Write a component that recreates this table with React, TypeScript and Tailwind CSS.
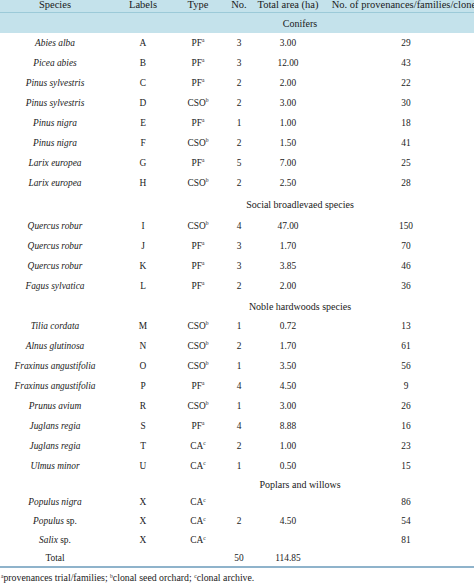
import React from "react";

type Row = {
  species: string;
  sp?: boolean;
  label: string;
  type: "PF" | "CSO" | "CA";
  no?: string;
  area?: string;
  count: string;
  h?: string;
};

type Section = { title: string; h: string; rows: Row[] };

const SUP = { PF: "a", CSO: "b", CA: "c" } as const;

const SECTIONS: Section[] = [
  {
    title: "Conifers",
    h: "h-[20px]",
    rows: [
      { species: "Abies alba", label: "A", type: "PF", no: "3", area: "3.00", count: "29" },
      { species: "Picea abies", label: "B", type: "PF", no: "3", area: "12.00", count: "43" },
      { species: "Pinus sylvestris", label: "C", type: "PF", no: "2", area: "2.00", count: "22" },
      { species: "Pinus sylvestris", label: "D", type: "CSO", no: "2", area: "3.00", count: "30" },
      { species: "Pinus nigra", label: "E", type: "PF", no: "1", area: "1.00", count: "18" },
      { species: "Pinus nigra", label: "F", type: "CSO", no: "2", area: "1.50", count: "41" },
      { species: "Larix europea", label: "G", type: "PF", no: "5", area: "7.00", count: "25" },
      { species: "Larix europea", label: "H", type: "CSO", no: "2", area: "2.50", count: "28" },
    ],
  },
  {
    title: "Social broadlevaed species",
    h: "h-[23px]",
    rows: [
      { species: "Quercus robur", label: "I", type: "CSO", no: "4", area: "47.00", count: "150" },
      { species: "Quercus robur", label: "J", type: "PF", no: "3", area: "1.70", count: "70" },
      { species: "Quercus robur", label: "K", type: "PF", no: "3", area: "3.85", count: "46" },
      { species: "Fagus sylvatica", label: "L", type: "PF", no: "2", area: "2.00", count: "36" },
    ],
  },
  {
    title: "Noble hardwoods species",
    h: "h-[20px]",
    rows: [
      { species: "Tilia cordata", label: "M", type: "CSO", no: "1", area: "0.72", count: "13" },
      { species: "Alnus glutinosa", label: "N", type: "CSO", no: "2", area: "1.70", count: "61" },
      { species: "Fraxinus angustifolia", label: "O", type: "CSO", no: "1", area: "3.50", count: "56" },
      { species: "Fraxinus angustifolia", label: "P", type: "PF", no: "4", area: "4.50", count: "9" },
      { species: "Prunus avium", label: "R", type: "CSO", no: "1", area: "3.00", count: "26" },
      { species: "Juglans regia", label: "S", type: "PF", no: "4", area: "8.88", count: "16" },
      { species: "Juglans regia", label: "T", type: "CA", no: "2", area: "1.00", count: "23" },
      { species: "Ulmus minor", label: "U", type: "CA", no: "1", area: "0.50", count: "15" },
    ],
  },
  {
    title: "Poplars and willows",
    h: "h-[17px]",
    rows: [
      { species: "Populus nigra", label: "X", type: "CA", count: "86", h: "h-[19px]" },
      { species: "Populus", sp: true, label: "X", type: "CA", no: "2", area: "4.50", count: "54", h: "h-[19px]" },
      { species: "Salix", sp: true, label: "X", type: "CA", count: "81", h: "h-[19px]" },
    ],
  },
];

const GRID = "grid grid-cols-[110px_66px_44px_38px_60px_176px]";
const CELL = "flex items-center justify-center whitespace-nowrap";

export default function App() {
  return (
    <div
      className="w-[474px] h-[585px] overflow-hidden bg-white text-[9.4px] text-[#1a1a1a]"
      style={{ fontFamily: '"Liberation Serif", "Times New Roman", serif' }}
    >
      <div className={`${GRID} h-[13px] bg-[#c4e2eb] border-b border-[#9ccad8] text-[10.5px] leading-[10px]`}>
        {["Species", "Labels", "Type", "No.", "Total area (ha)", "No. of provenances/families/clones"].map((t) => (
          <div key={t} className="flex justify-center whitespace-nowrap">
            {t}
          </div>
        ))}
      </div>

      {SECTIONS.map((s, i) => (
        <div key={s.title}>
          <div className={`flex items-center pl-[238px] ${s.h} ${i === 0 ? "bg-[#c4e2eb]" : ""}`}>
            <span className="w-[124px] flex justify-center whitespace-nowrap text-[10px]">{s.title}</span>
          </div>
          {s.rows.map((r, j) => (
            <div key={j} className={`${GRID} ${r.h ?? "h-[20px]"}`}>
              <div className={CELL}>
                <span className="italic">{r.species}</span>
                {r.sp && <span>&nbsp;sp.</span>}
              </div>
              <div className={CELL}>{r.label}</div>
              <div className={CELL}>
                {r.type}
                <span className="text-[5.5px] leading-none self-start mt-[5px]">{SUP[r.type]}</span>
              </div>
              <div className={CELL}>{r.no}</div>
              <div className={CELL}>{r.area}</div>
              <div className={CELL}>{r.count}</div>
            </div>
          ))}
        </div>
      ))}

      <div className={`${GRID} h-[18px] border-b-2 border-[#8fb3cb]`}>
        <div className={CELL}>Total</div>
        <div />
        <div />
        <div className={CELL}>50</div>
        <div className={CELL}>114.85</div>
        <div />
      </div>

      <p className="pl-[1px] pt-[4px] text-[9.8px] leading-[11px] whitespace-nowrap">
        <sup className="text-[5.5px]">a</sup>provenances trial/families; <sup className="text-[5.5px]">b</sup>clonal seed orchard;{" "}
        <sup className="text-[5.5px]">c</sup>clonal archive.
      </p>
    </div>
  );
}
